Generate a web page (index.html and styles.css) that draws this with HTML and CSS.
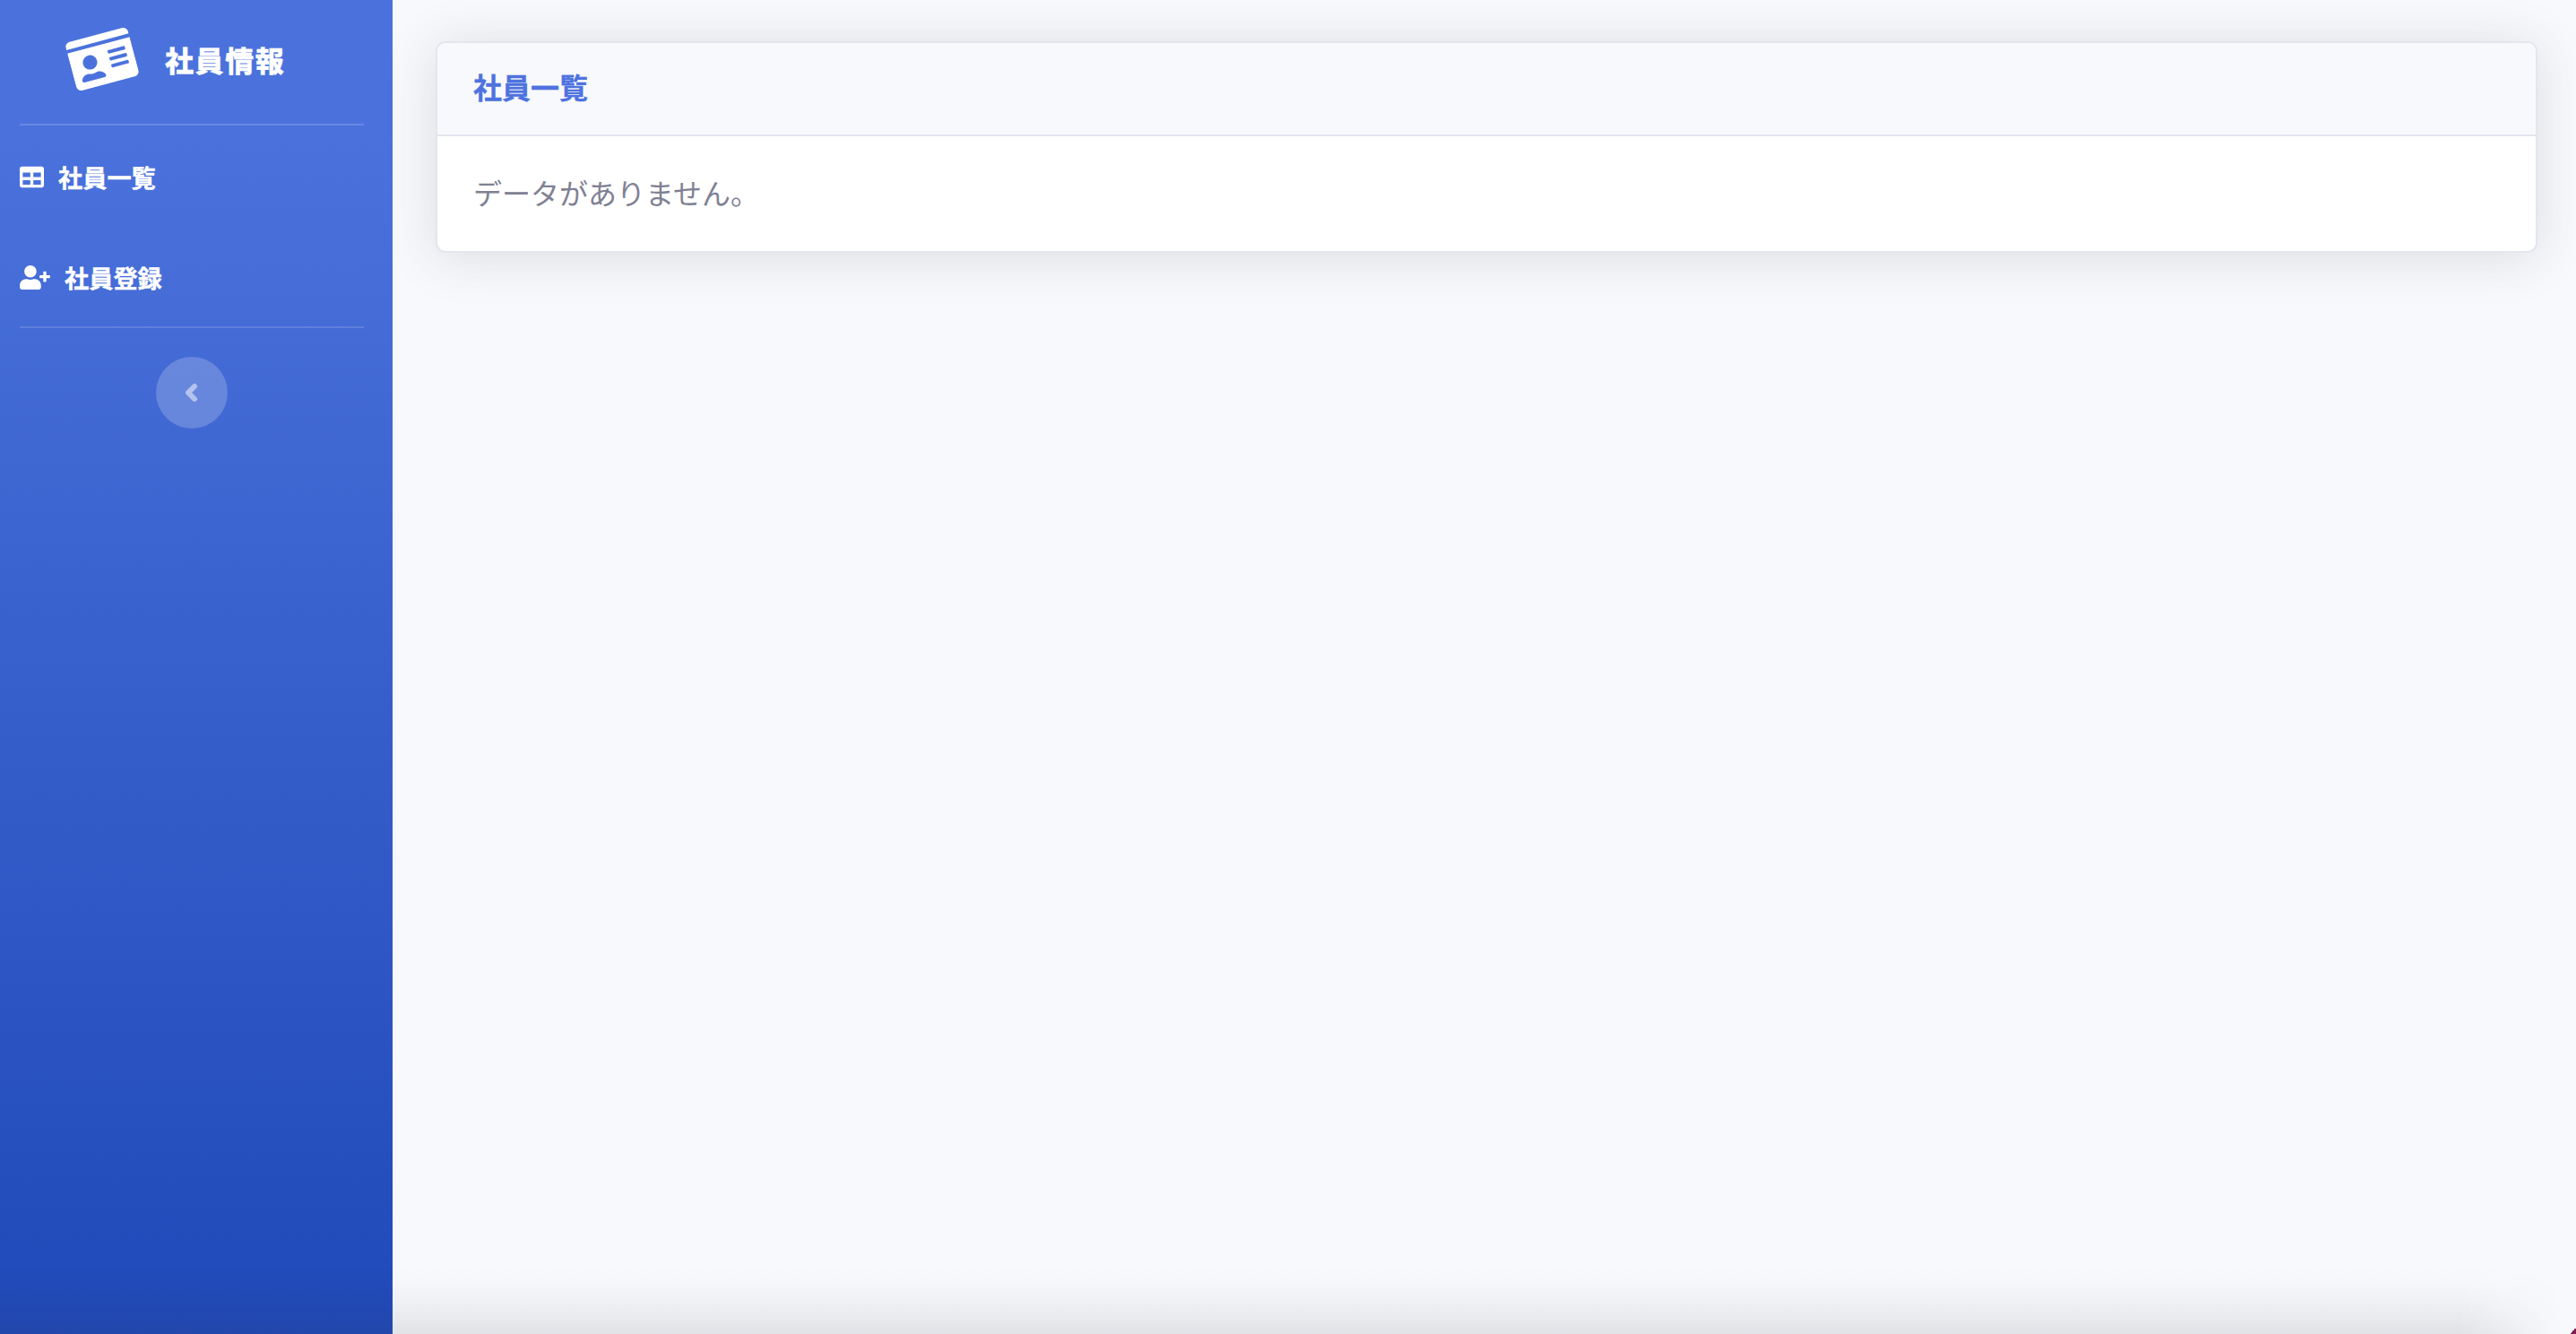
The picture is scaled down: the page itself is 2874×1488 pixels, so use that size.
FILE: index.html
```html
<!DOCTYPE html>
<html lang="ja">
<head>
<meta charset="utf-8">
<title>社員情報</title>
<link rel="stylesheet" href="styles.css">
</head>
<body>
<div class="layout">
  <nav class="sidebar">
    <a class="brand" href="#">
      <svg class="brand-icon" viewBox="0 0 576 512" aria-hidden="true"><path d="M528 32H48C21.5 32 0 53.5 0 80v16h576V80c0-26.5-21.5-48-48-48zM0 432c0 26.5 21.5 48 48 48h480c26.5 0 48-21.5 48-48V128H0v304zm352-232c0-4.4 3.6-8 8-8h144c4.4 0 8 3.6 8 8v16c0 4.4-3.6 8-8 8H360c-4.4 0-8-3.6-8-8v-16zm0 64c0-4.4 3.6-8 8-8h144c4.4 0 8 3.6 8 8v16c0 4.4-3.6 8-8 8H360c-4.4 0-8-3.6-8-8v-16zm0 64c0-4.4 3.6-8 8-8h144c4.4 0 8 3.6 8 8v16c0 4.4-3.6 8-8 8H360c-4.4 0-8-3.6-8-8v-16zM176 192c35.3 0 64 28.7 64 64s-28.7 64-64 64-64-28.7-64-64 28.7-64 64-64zM67.1 396.2C75.5 370.5 99.6 352 128 352h8.2c12.3 5.1 25.7 8 39.8 8s27.6-2.9 39.8-8h8.2c28.4 0 52.5 18.5 60.9 44.2 3.2 9.9-5.2 19.8-15.6 19.8H82.7c-10.4 0-18.8-10-15.6-19.8z"/></svg>
      <span class="brand-text">社員情報</span>
    </a>
    <hr class="divider">
    <a class="nav-item" href="#">
      <svg class="icon-table" viewBox="0 0 512 512" aria-hidden="true"><path d="M464 32H48C21.49 32 0 53.49 0 80v352c0 26.51 21.49 48 48 48h416c26.51 0 48-21.49 48-48V80c0-26.51-21.49-48-48-48zM224 416H64v-96h160v96zm0-160H64v-96h160v96zm224 160H288v-96h160v96zm0-160H288v-96h160v96z"/></svg>
      <span>社員一覧</span>
    </a>
    <a class="nav-item" href="#">
      <svg class="icon-user" viewBox="0 0 640 512" aria-hidden="true"><path d="M624 208h-64v-64c0-8.8-7.2-16-16-16h-32c-8.8 0-16 7.2-16 16v64h-64c-8.8 0-16 7.2-16 16v32c0 8.8 7.2 16 16 16h64v64c0 8.8 7.2 16 16 16h32c8.8 0 16-7.2 16-16v-64h64c8.8 0 16-7.2 16-16v-32c0-8.8-7.2-16-16-16zm-400 48c70.7 0 128-57.3 128-128S294.7 0 224 0 96 57.3 96 128s57.3 128 128 128zm89.6 32h-16.7c-22.2 10.2-46.9 16-72.9 16s-50.6-5.8-72.9-16h-16.7C60.2 288 0 348.2 0 422.4V464c0 26.5 21.5 48 48 48h352c26.5 0 48-21.5 48-48v-41.6c0-74.2-60.2-134.4-134.4-134.4z"/></svg>
      <span>社員登録</span>
    </a>
    <hr class="divider">
    <div class="toggle-row">
      <button class="toggle" type="button" aria-label="サイドバーを閉じる">
        <svg class="icon-chevron" viewBox="0 0 16 24" aria-hidden="true"><path d="M12 5 L5 12 L12 19"/></svg>
      </button>
    </div>
  </nav>
  <main class="content">
    <section class="card">
      <h2 class="card-header">社員一覧</h2>
      <div class="card-body">データがありません。</div>
    </section>
  </main>
</div>
<div class="edge-shadow"></div>
<div class="corner-dot"></div>
</body>
</html>
```

FILE: styles.css
```css
* { box-sizing: border-box; }
html, body {
  margin: 0;
  height: 1488px;
  overflow: hidden;
}
body {
  position: relative;
  background: #f8f9fc;
  font-family: "Noto Sans CJK JP", "Noto Sans", sans-serif;
  color: #858796;
}
.layout {
  display: flex;
  height: 1488px;
}
.sidebar {
  width: 438px;
  flex: none;
  padding: 0 32px 0 22px;
  background-image: linear-gradient(180deg, #4b72dc 10%, #2049b9 100%);
}
.brand {
  display: flex;
  align-items: center;
  height: 138px;
  padding: 0 0 6px 55.5px;
  color: #fff;
  text-decoration: none;
}
.brand-icon {
  width: 72px;
  height: 64px;
  fill: #fff;
  transform: rotate(-15deg);
}
.brand-text {
  margin-left: 34.5px;
  font-size: 32px;
  line-height: 40px;
  font-weight: 800;
  letter-spacing: 1.6px;
  white-space: nowrap;
  -webkit-text-stroke: 0.3px #fff;
}
.divider {
  height: 2px;
  margin: 0;
  border: 0;
  background: rgba(255, 255, 255, 0.15);
}
.nav-item {
  display: flex;
  align-items: center;
  gap: 16px;
  height: 112px;
  padding-top: 2px;
  color: #fff;
  font-size: 27.2px;
  line-height: 34px;
  font-weight: 700;
  text-decoration: none;
  -webkit-text-stroke: 0.4px #fff;
}
.icon-table {
  width: 27px;
  height: 27px;
  fill: #fff;
}
.icon-user {
  width: 34px;
  height: 27px;
  fill: #fff;
}
.toggle-row {
  display: flex;
  justify-content: center;
  padding-top: 32px;
}
.toggle {
  display: flex;
  align-items: center;
  justify-content: center;
  width: 80px;
  height: 80px;
  padding: 0;
  border: 0;
  border-radius: 50%;
  background: rgba(255, 255, 255, 0.2);
}
.icon-chevron {
  width: 16px;
  height: 24px;
  margin-left: -3px;
  fill: none;
  stroke: rgba(255, 255, 255, 0.5);
  stroke-width: 6;
  stroke-linecap: round;
  stroke-linejoin: round;
}
.content {
  flex: 1;
  padding: 46px 43px 0 48px;
}
.card {
  border: 2px solid #e3e6f0;
  border-radius: 11px;
  background: #fff;
  box-shadow: 0 4.8px 56px 0 rgba(58, 59, 69, 0.15);
  overflow: hidden;
}
.card-header {
  margin: 0;
  height: 104px;
  padding: 0 40px;
  border-bottom: 2px solid #e3e6f0;
  background: #f8f9fc;
  color: #4e73df;
  font-size: 32px;
  line-height: 97px;
  font-weight: 700;
  -webkit-text-stroke: 0.3px #4e73df;
}
.card-body {
  height: 128px;
  padding: 0 40px;
  font-size: 32px;
  line-height: 124px;
  color: #7f8193;
}
.edge-shadow {
  position: absolute;
  bottom: 0;
  left: 0;
  right: 0;
  height: 76px;
  background: linear-gradient(180deg,
    rgba(58, 59, 69, 0) 0,
    rgba(58, 59, 69, 0.013) 24%,
    rgba(58, 59, 69, 0.039) 50%,
    rgba(58, 59, 69, 0.075) 74%,
    rgba(58, 59, 69, 0.1) 89%,
    rgba(58, 59, 69, 0.115) 100%);
  -webkit-mask-image: linear-gradient(to left, transparent 15px, #000 130px);
  mask-image: linear-gradient(to left, transparent 15px, #000 130px);
}
.corner-dot {
  position: absolute;
  right: 0;
  bottom: 0;
  width: 7px;
  height: 7px;
  background: linear-gradient(135deg, transparent 50%, #7d1d50 50%);
}
```
